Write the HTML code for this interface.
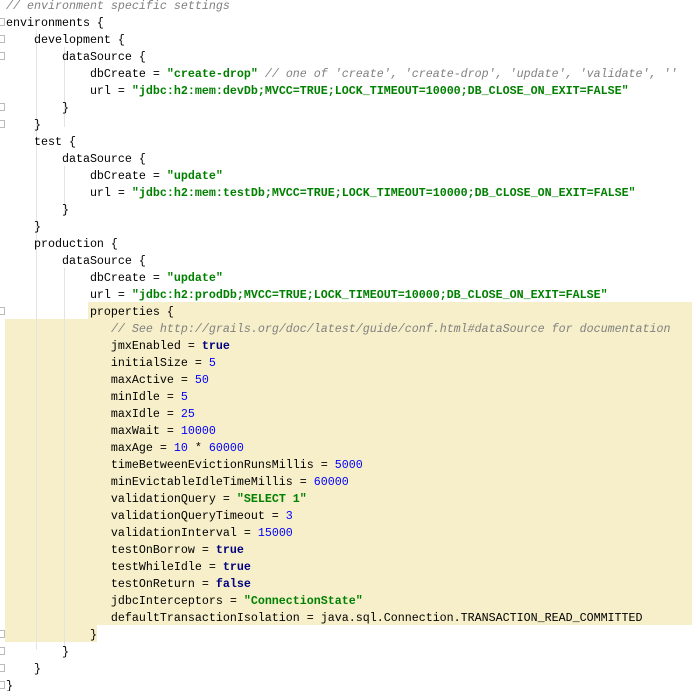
<!DOCTYPE html>
<html><head><style>
html,body{margin:0;padding:0;background:#fff;width:692px;height:691px;overflow:hidden;position:relative}
.hl{position:absolute;background:#f6efc9}
pre{position:absolute;left:6px;top:-2px;margin:0;font-family:"Liberation Mono",monospace;font-size:11.67px;line-height:17px;color:#000;white-space:pre}
.c{color:#808080;font-style:italic}
.s{color:#008000;font-weight:bold;-webkit-text-stroke:0}
.n{color:#0000ff}
.k{color:#000080;font-weight:bold}
.g{position:absolute;width:1px;background:#e4e4e4}
.f{position:absolute;left:0;width:5px;height:8px;border:1px solid #bbb;border-left:none;box-sizing:border-box}
</style></head><body>
<div class="hl" style="left:88px;top:302px;width:604px;height:17px"></div>
<div class="hl" style="left:5px;top:319px;width:687px;height:306px"></div>
<div class="hl" style="left:5px;top:625px;width:92px;height:17px"></div>
<div class="g" style="left:36px;top:30px;height:620px"></div>
<div class="g" style="left:64px;top:47px;height:80px"></div>
<div class="g" style="left:64px;top:166px;height:50px"></div>
<div class="g" style="left:64px;top:268px;height:380px"></div>
<div class="f" style="top:18px"></div>
<div class="f" style="top:35px"></div>
<div class="f" style="top:52px"></div>
<div class="f" style="top:103px"></div>
<div class="f" style="top:120px"></div>
<div class="f" style="top:307px"></div>
<div class="f" style="top:630px"></div>
<div class="f" style="top:647px"></div>
<div class="f" style="top:664px"></div>
<div class="f" style="top:681px"></div>
<pre><span class="c">// environment specific settings</span>
environments {
    development {
        dataSource {
            dbCreate = <span class="s">"create-drop"</span> <span class="c">// one of 'create', 'create-drop', 'update', 'validate', ''</span>
            url = <span class="s">"jdbc:h2:mem:devDb;MVCC=TRUE;LOCK_TIMEOUT=10000;DB_CLOSE_ON_EXIT=FALSE"</span>
        }
    }
    test {
        dataSource {
            dbCreate = <span class="s">"update"</span>
            url = <span class="s">"jdbc:h2:mem:testDb;MVCC=TRUE;LOCK_TIMEOUT=10000;DB_CLOSE_ON_EXIT=FALSE"</span>
        }
    }
    production {
        dataSource {
            dbCreate = <span class="s">"update"</span>
            url = <span class="s">"jdbc:h2:prodDb;MVCC=TRUE;LOCK_TIMEOUT=10000;DB_CLOSE_ON_EXIT=FALSE"</span>
            properties {
               <span class="c">// See http://grails.org/doc/latest/guide/conf.html#dataSource for documentation</span>
               jmxEnabled = <span class="k">true</span>
               initialSize = <span class="n">5</span>
               maxActive = <span class="n">50</span>
               minIdle = <span class="n">5</span>
               maxIdle = <span class="n">25</span>
               maxWait = <span class="n">10000</span>
               maxAge = <span class="n">10</span> * <span class="n">60000</span>
               timeBetweenEvictionRunsMillis = <span class="n">5000</span>
               minEvictableIdleTimeMillis = <span class="n">60000</span>
               validationQuery = <span class="s">"SELECT 1"</span>
               validationQueryTimeout = <span class="n">3</span>
               validationInterval = <span class="n">15000</span>
               testOnBorrow = <span class="k">true</span>
               testWhileIdle = <span class="k">true</span>
               testOnReturn = <span class="k">false</span>
               jdbcInterceptors = <span class="s">"ConnectionState"</span>
               defaultTransactionIsolation = java.sql.Connection.TRANSACTION_READ_COMMITTED
            }
        }
    }
}</pre>
</body></html>
